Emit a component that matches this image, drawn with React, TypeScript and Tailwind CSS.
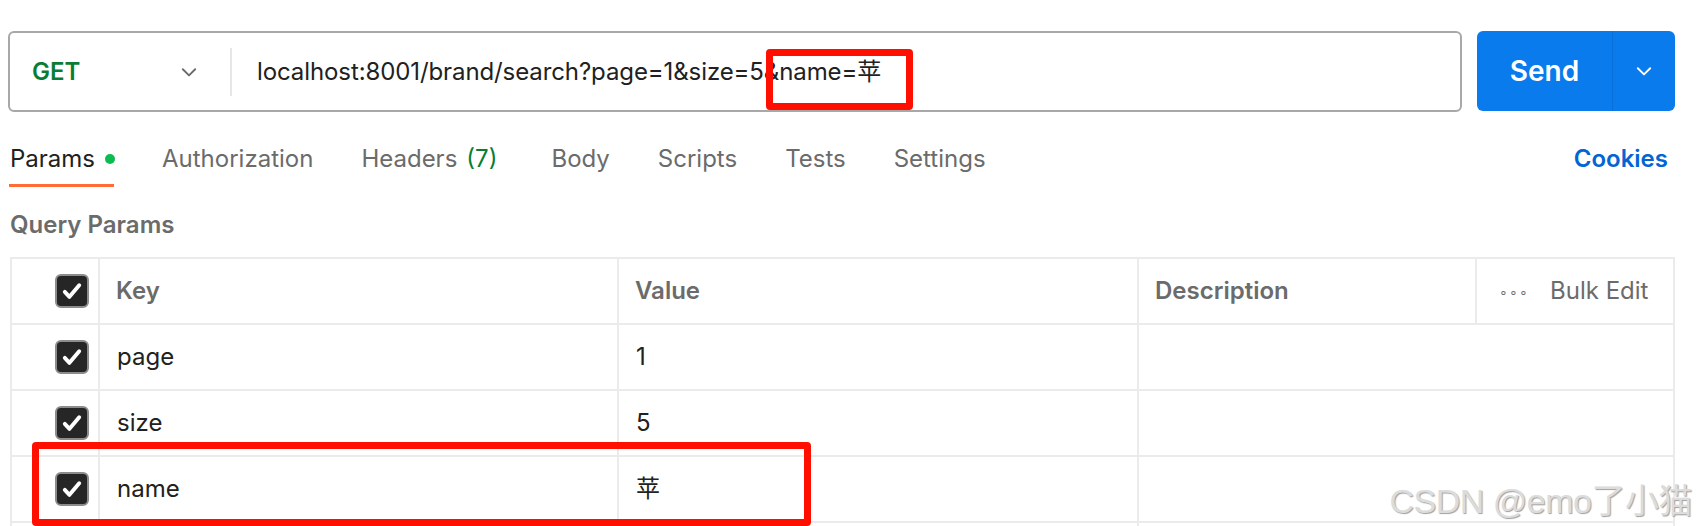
import React from 'react';

const tabs = [
  { label: 'Authorization', ml: 'ml-[47px]' },
  { label: 'Headers', count: '(7)', ml: 'ml-[48px]' },
  { label: 'Body', ml: 'ml-[54px]' },
  { label: 'Scripts', ml: 'ml-[48px]' },
  { label: 'Tests', ml: 'ml-[48px]' },
  { label: 'Settings', ml: 'ml-[48px]' },
];

const rows = [
  { key: 'page', value: '1' },
  { key: 'size', value: '5' },
  { key: 'name', value: '苹' },
];

const Chevron = ({ className }: { className?: string }) => (
  <svg viewBox="0 0 16 16" className={className} fill="none" stroke="currentColor" strokeWidth="1.4" strokeLinecap="round" strokeLinejoin="round">
    <path d="M3.5 6l4.5 4.5L12.5 6" />
  </svg>
);

const Checkbox = () => (
  <div className="flex h-[34px] w-[34px] items-center justify-center rounded-[6px] border-2 border-[#8c8c8c] bg-[#262626]">
    <svg viewBox="0 0 16 16" className="h-[24px] w-[24px]" fill="none" stroke="#fff" strokeWidth="2.6" strokeLinecap="round" strokeLinejoin="round">
      <path d="M3.2 8.6l3.1 3.3L12.8 4.2" />
    </svg>
  </div>
);

export default function App() {
  return (
    <div className="relative h-[526px] w-[1698px] overflow-hidden bg-white font-['Inter','Noto_Sans_CJK_SC',sans-serif] text-[#212121]">
      {/* Request bar */}
      <div className="flex pl-[8px] pt-[31px]">
        <div className="flex h-[81px] w-[1454px] items-center rounded-[6px] border-2 border-[#a8a8a8]">
          <div className="flex w-[220px] items-center justify-between pl-[22px] pr-[30px]">
            <span className="text-[24px] font-semibold text-[#0a7d34]">GET</span>
            <Chevron className="h-[22px] w-[22px] text-[#6b6b6b]" />
          </div>
          <div className="h-[48px] w-[2px] bg-[#e6e6e6]" />
          <div className="pl-[25px] text-[24px] tracking-[-0.1px]">localhost:8001/brand/search?page=1&amp;size=5&amp;name=苹</div>
        </div>
        <div className="ml-[15px] flex h-[80px] w-[198px] overflow-hidden rounded-[6px] bg-[#097bed] text-white">
          <div className="flex w-[135px] items-center justify-center text-[28px] font-semibold">Send</div>
          <div className="w-[1px] bg-[#0a6ed4]" />
          <div className="flex flex-1 items-center justify-center">
            <Chevron className="h-[22px] w-[22px]" />
          </div>
        </div>
      </div>

      {/* Tabs */}
      <div className="mt-[27px] flex items-start pl-[10px] pr-[30px]">
        <div className="flex flex-col">
          <div className="flex h-[40px] items-center gap-[10px]">
            <span className="text-[24px]">Params</span>
            <span className="h-[10px] w-[10px] rounded-full bg-[#0cbb52]" />
          </div>
          <div className="mt-[5px] h-[3px] w-[105px] -translate-x-[1px] bg-[#ff6c37]" />
        </div>
        {tabs.map((t) => (
          <div key={t.label} className={`${t.ml} flex h-[40px] items-center text-[24px] text-[#6b6b6b]`}>
            {t.label}
            {t.count && <span className="ml-[9px] text-[#0a7d34]">{t.count}</span>}
          </div>
        ))}
        <div className="ml-auto flex h-[40px] items-center text-[24px] font-semibold text-[#0265d2]">Cookies</div>
      </div>

      {/* Query params */}
      <div className="mt-[20px] pl-[10px] text-[24px] font-semibold text-[#6b6b6b]">Query Params</div>

      <div className="ml-[10px] mt-[14px] w-[1665px] border-l-2 border-r-2 border-t-2 border-[#ebebeb]">
        <div className="flex h-[66px] border-b-2 border-[#ebebeb] text-[24px] font-semibold text-[#6b6b6b]">
          <div className="flex w-[88px] items-center justify-end pr-[9px] border-r-2 border-[#ebebeb]">
            <Checkbox />
          </div>
          <div className="flex w-[519px] items-center pl-[16px] border-r-2 border-[#ebebeb]">Key</div>
          <div className="flex w-[520px] items-center pl-[16px] border-r-2 border-[#ebebeb]">Value</div>
          <div className="flex w-[338px] items-center pl-[16px] border-r-2 border-[#ebebeb]">Description</div>
          <div className="flex flex-1 items-center gap-[21px] pl-[22px] font-normal">
            <span className="text-[14px] tracking-[1px]">∘∘∘</span>
            <span>Bulk Edit</span>
          </div>
        </div>
        {rows.map((r) => (
          <div key={r.key} className="flex h-[66px] border-b-2 border-[#ebebeb] text-[24px]">
            <div className="flex w-[88px] items-center justify-end pr-[9px] border-r-2 border-[#ebebeb]">
              <Checkbox />
            </div>
            <div className="flex w-[519px] items-center pl-[17px] border-r-2 border-[#ebebeb]">{r.key}</div>
            <div className="flex w-[520px] items-center pl-[17px] border-r-2 border-[#ebebeb]">{r.value}</div>
            <div className="flex-1" />
          </div>
        ))}
        <div className="flex h-[20px]">
          <div className="w-[88px] border-r-2 border-[#ebebeb]" />
          <div className="w-[519px] border-r-2 border-[#ebebeb]" />
          <div className="w-[520px] border-r-2 border-[#ebebeb]" />
        </div>
      </div>

      {/* Annotation boxes */}
      <div className="absolute left-[766px] top-[49px] h-[61px] w-[147px] rounded-[4px] border-[7px] border-[#ff0f00]" />
      <div className="absolute left-[32px] top-[442px] h-[84px] w-[779px] rounded-[4px] border-[7px] border-[#ff0f00]" />

      {/* Watermark */}
      <div className="absolute right-[6px] top-[476px] font-['Liberation_Sans','Noto_Sans_CJK_SC',sans-serif] text-[34px] tracking-[-0.5px] text-[#dcdcdc] [text-shadow:1px_1px_1px_#a0a0a0]">
        CSDN @emo了小猫
      </div>
    </div>
  );
}
